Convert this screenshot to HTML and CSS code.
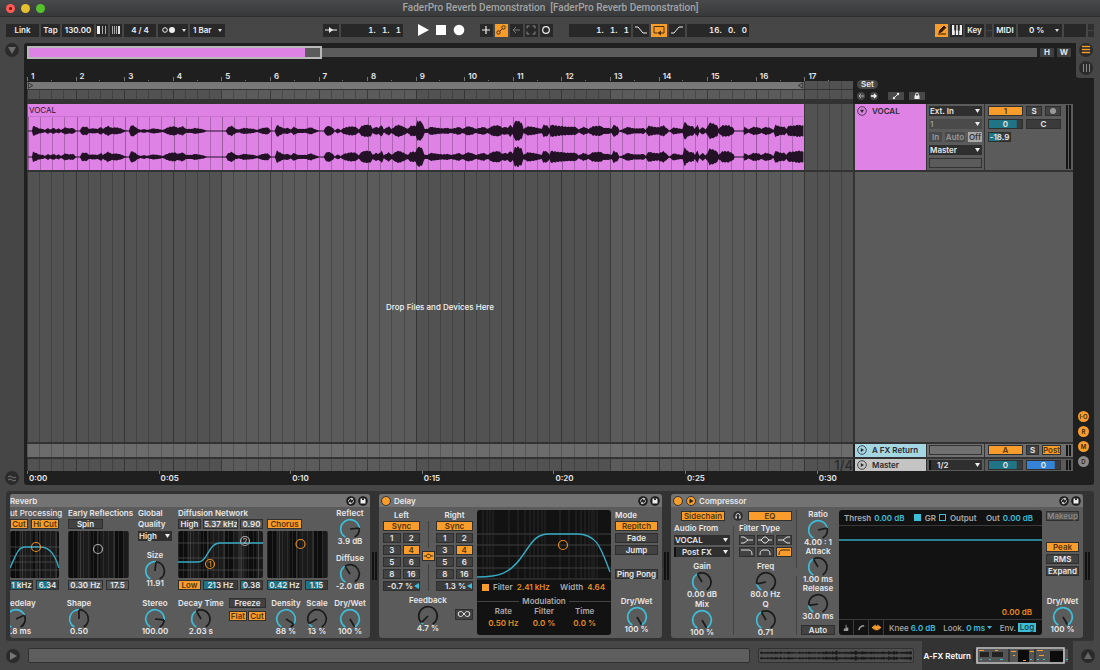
FILE: index.html
```html
<!DOCTYPE html>
<html lang="en">
<head>
    <meta charset="UTF-8">
    <meta name="viewport" content="width=device-width, initial-scale=1.0">
    <title>FaderPro Reverb Demonstration</title>
    <link rel="stylesheet" href="styles.css">
</head>
<body>

<!-- Shared icons -->
<svg class="hidden">
    <symbol id="i-swap" viewBox="0 0 10 10"><circle cx="5" cy="5" r="4.8" fill="#1c1c1c"/><path d="M2.6 5.6A2.5 2.5 0 0 1 6 2.8M7.4 4.4A2.5 2.5 0 0 1 4 7.2" fill="none" stroke="#ddd"/><path d="M5.4 1.4 7.6 3 5.4 4.4zM4.6 8.6 2.4 7l2.2-1.400z" fill="#ddd"/></symbol>
    <symbol id="i-save" viewBox="0 0 10 10"><circle cx="5" cy="5" r="4.8" fill="#1c1c1c"/><path d="M2.500 2.500h4.200l.8.8v4.200h-5z" fill="#eee"/><path d="M4 2.500h2v1.500H4z" fill="#1c1c1c"/></symbol>
    <symbol id="i-fold" viewBox="0 0 10 10"><circle cx="5" cy="5" r="4.300" fill="none" stroke="currentColor" stroke-width=".8"/><path d="M3.800 3v4L7 5z" fill="currentColor"/></symbol>
</svg>

<header class="titlebar">
    <button class="light red" aria-label="Close"></button>
    <button class="light yellow" aria-label="Minimize"></button>
    <button class="light green" aria-label="Zoom"></button>
    <h1>FaderPro Reverb Demonstration&nbsp; [FaderPro Reverb Demonstration]</h1>
</header>

<nav class="toolbar">
    <div class="tools">
        <button class="tool w33">Link</button>
        <button class="tool w19">Tap</button>
        <input class="tool w32" aria-label="Tempo" value="130.00">
        <button class="tool w12" aria-label="Nudge down"><svg viewBox="0 0 12 12"><path d="M1 2h3v8H1z" fill="#eee"/><path d="M6 2h1v8H6zM9 2h1v8H9z" fill="#aaa"/></svg></button>
        <button class="tool w12" aria-label="Nudge up"><svg viewBox="0 0 12 12"><path d="M2 2h1v8H2zM4 2h1v8H4zM6 2h1v8H6z" fill="#aaa"/><path d="M8 2h2v8H8z" fill="#ddd"/></svg></button>
        <input class="tool w32" aria-label="Time signature" value="4 / 4">
        <button class="tool w30" aria-label="Metronome"><svg class="wide" viewBox="0 0 28 12"><circle cx="6" cy="6" r="2.300" fill="none" stroke="#eee"/><circle cx="13" cy="6" r="3" fill="#eee"/><path d="M23 5h4l-2 3z" fill="#ddd"/></svg></button>
        <select class="tool w35" aria-label="Quantization"><option>1 Bar</option></select>
    </div>
    <div class="spacer"></div>
    <div class="tools">
        <button class="tool w16" aria-label="Follow"><svg viewBox="0 0 12 12"><path d="M0 6h12" stroke="#eee"/><path d="M4 3v6l4-3z" fill="#eee"/></svg></button>
        <input class="tool w62 count" aria-label="Position" value="1.   1.   1">
        <div class="transport">
            <button aria-label="Play"><svg viewBox="0 0 12 12"><path d="M1 0v12l11-6z" fill="#fff"/></svg></button>
            <button aria-label="Stop"><svg viewBox="0 0 12 12"><path d="M1 1h10v10H1z" fill="#fff"/></svg></button>
            <button aria-label="Record"><svg viewBox="0 0 12 12"><circle cx="6" cy="6" r="5.300" fill="#fff"/></svg></button>
        </div>
        <button class="tool w13" aria-label="Overdub"><svg viewBox="0 0 12 12"><path d="M6 2v8M2 6h8" stroke="#eee" stroke-width="1.200"/></svg></button>
        <button class="tool w13 on" aria-label="Automation arm"><svg viewBox="0 0 12 12"><g fill="none" stroke="#4a2f0c"><circle cx="3.500" cy="8.500" r="1.700"/><circle cx="8.500" cy="3.500" r="1.700"/><path d="m4.800 7.200 2.400-2.400"/></g></svg></button>
        <button class="tool w13" aria-label="Re-enable automation"><svg viewBox="0 0 12 12"><path d="M10 6H3M6 3 3 6l3 3" fill="none" stroke="#777"/></svg></button>
        <button class="tool w13" aria-label="Capture"><svg viewBox="0 0 12 12"><path d="M2 4.500V2h2.500M7.500 2H10v2.500M10 7.500V10H7.500M4.500 10H2V7.500" fill="none" stroke="#888"/></svg></button>
        <button class="tool w13" aria-label="Session record"><svg viewBox="0 0 12 12"><circle cx="6" cy="6" r="3.300" fill="none" stroke="#eee" stroke-width="1.200"/></svg></button>
        <div class="gap"></div>
        <input class="tool w62 count" aria-label="Loop start" value="1.   1.   1">
        <button class="tool w16" aria-label="Punch in"><svg viewBox="0 0 12 12"><path d="M0 3h3l5 6h4" fill="none" stroke="#eee"/></svg></button>
        <button class="tool w16 on" aria-label="Loop"><svg viewBox="0 0 12 12"><path d="M4.500 9H1V2.500h10V9H8" fill="none" stroke="#4a2f0c"/><path d="M4.500 9 8 6.500v5z" fill="#4a2f0c"/></svg></button>
        <button class="tool w16" aria-label="Punch out"><svg viewBox="0 0 12 12"><path d="M0 9h3l5-6h4" fill="none" stroke="#eee"/></svg></button>
        <input class="tool w62 count" aria-label="Loop length" value="16.   0.   0">
    </div>
    <div class="spacer wider"></div>
    <div class="tools">
        <button class="tool w13 on" aria-label="Draw mode"><svg viewBox="0 0 12 12"><path d="m3 8.500.8-2L8 2l1.700 1.700-4.300 4.300zM2 10h8" fill="#2a1a05" stroke="#2a1a05"/></svg></button>
        <button class="tool w13" aria-label="Computer keyboard"><svg viewBox="0 0 12 12"><path d="M1 1h10v10H1z" fill="#eee"/><path d="M4.300 1v10M7.700 1v10" stroke="#222"/><path d="M4.300 1v5.500M7.700 1v5.500" stroke="#222" stroke-width="2"/></svg></button>
        <button class="tool w19">Key</button>
        <span class="pair"><i></i><i></i></span>
        <button class="tool w21">MIDI</button>
        <select class="tool w44" aria-label="CPU load"><option>0 %</option></select>
        <span class="tool w21"></span>
        <span class="pair"><i></i><i></i></span>
    </div>
</nav>

<main class="workspace">
    <aside class="left-rail">
        <button class="round" aria-label="Show browser"><svg viewBox="0 0 14 14"><path d="M3 4h8l-4 7z" fill="#6c6c6c"/></svg></button>
        <button class="round" aria-label="Show groove pool"><svg viewBox="0 0 14 14"><path d="M3 6q2-2 4 0t4 0M3 9q2-2 4 0t4 0" fill="none" stroke="#777"/></svg></button>
    </aside>

    <section class="arranger">
        <div class="sheet">
            <div class="overview">
                <div class="overview-bar"><div class="overview-window"><div class="overview-clip"></div></div></div>
                <button class="hw">H</button>
                <button class="hw">W</button>
            </div>

            <div class="row ruler-row">
                <div class="lane">
                    <ol class="bars">
                        <li>1</li><li>2</li><li>3</li><li>4</li><li>5</li><li>6</li><li>7</li><li>8</li><li>9</li><li>10</li><li>11</li><li>12</li><li>13</li><li>14</li><li>15</li><li>16</li><li>17</li>
                    </ol>
                    <div class="loop grid"><div class="loop-bar">
                        <svg viewBox="0 0 7 8"><path d="M1 1l5 3-5 3z" fill="none" stroke="#2a2a2a"/></svg>
                        <svg viewBox="0 0 7 8"><path d="M6 1 1 4l5 3z" fill="none" stroke="#2a2a2a"/></svg>
                    </div></div>
                    <div class="scrub grid"></div>
                    <div class="locators"></div>
                </div>
                <div class="set-tools">
                    <button class="set">Set</button>
                    <div class="set-row">
                        <button class="dot" aria-label="Previous locator"><svg viewBox="0 0 8 8"><path d="M7 4H2M4 2 2 4l2 2" fill="none" stroke="#aaa"/></svg></button>
                        <button class="dot" aria-label="Next locator"><svg viewBox="0 0 8 8"><path d="M1 4h5M4 2l2 2-2 2" fill="none" stroke="#fff" stroke-width="1.300"/></svg></button>
                        <button class="tag" aria-label="Automation mode"><svg viewBox="0 0 10 8"><path d="m3 6 4-4" stroke="#eee"/><circle cx="3" cy="6" r="1.200" fill="#eee"/><circle cx="7" cy="2" r="1.200" fill="#eee"/></svg></button>
                        <button class="tag" aria-label="Lock envelopes"><svg viewBox="0 0 10 8"><path d="M2.500 3.500h5V7h-5z" fill="#eee"/><path d="M3.500 4V2.500a1.500 1.500 0 0 1 3 0V4" fill="none" stroke="#eee"/></svg></button>
                    </div>
                </div>
            </div>

            <div class="row track-row">
                <div class="lane grid">
                    <div class="clip">
                        <div class="clip-name">VOCAL</div>
                        <svg class="wave" viewBox="0 0 777 53" preserveAspectRatio="none"></svg>
                    </div>
                </div>
                <div class="head">
                    <div class="name pink"><svg class="rot"><use href="#i-fold"/></svg>VOCAL</div>
                    <div class="io">
                        <select class="pick" aria-label="Input type"><option>Ext. In</option></select>
                        <select class="pick dim" aria-label="Input channel"><option>1</option></select>
                        <div class="monitor"><button>In</button><button>Auto</button><button class="sel">Off</button></div>
                        <select class="pick" aria-label="Output type"><option>Master</option></select>
                        <div class="slot"></div>
                    </div>
                    <div class="mixer">
                        <div class="line"><button class="btn on w35">1</button><button class="btn w16">S</button><button class="btn w16" aria-label="Arm"><svg viewBox="0 0 8 8"><circle cx="4" cy="4" r="3" fill="#999"/></svg></button></div>
                        <div class="line"><input class="val w35" aria-label="Volume" value="0" style="--fill:84%"><input class="val w35" aria-label="Pan" value="C"></div>
                        <div class="line"><input class="val w23" aria-label="Send A" value="-18.9" style="--fill:50%"></div>
                        <div class="meter"></div>
                    </div>
                </div>
            </div>

            <div class="row drop-row">
                <div class="lane grid"><p>Drop Files and Devices Here</p></div>
                <div class="blank"></div>
            </div>

            <div class="row return-row">
                <div class="lane grid"></div>
                <div class="head">
                    <div class="name blue"><svg><use href="#i-fold"/></svg>A FX Return</div>
                    <div class="io"><div class="slot"></div></div>
                    <div class="mixer">
                        <div class="line"><button class="btn on w35">A</button><button class="btn w13">S</button><button class="btn on w19">Post</button></div>
                        <div class="meter"></div>
                    </div>
                </div>
            </div>

            <div class="row master-row">
                <div class="lane grid"><span class="zoom-level">1/4</span></div>
                <div class="head">
                    <div class="name grey"><svg><use href="#i-fold"/></svg>Master</div>
                    <div class="io"><select class="pick bars-in" aria-label="Master output"><option>1/2</option></select></div>
                    <div class="mixer">
                        <div class="line"><input class="val w35" aria-label="Master volume" value="0" style="--fill:84%"><input class="val w35 cue" aria-label="Cue volume" value="0" style="--fill:84%"></div>
                        <div class="meter"></div>
                    </div>
                </div>
            </div>

            <ol class="times">
                <li>0:00</li><li>0:05</li><li>0:10</li><li>0:15</li><li>0:20</li><li>0:25</li><li>0:30</li>
            </ol>
        </div>

        <aside class="right-rail">
            <div class="views">
                <button class="round" aria-label="Arrangement view"><svg viewBox="0 0 14 14"><path d="M3 3h8v1H3zM3 6h8v1H3zM3 9h8v1H3z" fill="#f89d2c" stroke="#f89d2c" stroke-width=".4"/></svg></button>
                <button class="round" aria-label="Session view"><svg viewBox="0 0 14 14"><path d="M4 3h1v8H4zM7 3h1v8H7zM10 3h1v8h-1z" fill="#888"/></svg></button>
            </div>
            <div class="shows">
                <button>I·O</button>
                <button>R</button>
                <button>M</button>
                <button class="off">D</button>
            </div>
        </aside>
    </section>
</main>

<section class="devices">
    <!-- The chain is scrolled, so the first column shows only its right part -->
    <article class="device reverb">
        <header><h2>Reverb</h2><svg><use href="#i-swap"/></svg><svg><use href="#i-save"/></svg></header>
        <div class="body">
            <div class="col c-input">
                <div class="upper">
                    <h3>ut Processing</h3>
                    <div class="line"><button class="btn on w17">Cut</button><button class="btn on w28">Hi Cut</button></div>
                    <svg class="plot" viewBox="0 0 49 47"><path class="rule" d="M0 16h49M0 25h49M0 31h49M0 39h49M27 0v47"/><path class="curve" d="M0 37C6 24 8 16 15 16H30C40 16 45 24 49 37"/><circle class="node" cx="26" cy="16" r="4.500"/></svg>
                    <div class="line"><input class="val w23" aria-label="Input filter frequency" value="1 kHz" style="--fill:48%"><input class="val w23" aria-label="Input filter width" value="6.34" style="--fill:60%"></div>
                </div>
                <label class="dial">edelay<input type="range" value="72"><output>.8 ms</output></label>
            </div>
            <div class="col c-early">
                <div class="upper">
                    <h3>Early Reflections</h3>
                    <button class="btn w35">Spin</button>
                    <svg class="plot" viewBox="0 0 61 47"><circle class="node pale" cx="30" cy="18" r="4.500"/></svg>
                    <div class="line"><input class="val w35 flat" aria-label="Spin rate" value="0.30 Hz"><input class="val w23 flat" aria-label="Spin amount" value="17.5"></div>
                </div>
                <label class="dial left">Shape<input type="range" value="50"><output>0.50</output></label>
            </div>
            <div class="col c-global">
                <div class="upper">
                    <h3>Global</h3>
                    <label for="quality">Quality</label>
                    <select class="pick" id="quality"><option>High</option></select>
                    <label class="dial">Size<input type="range" value="52"><output>11.91</output></label>
                </div>
                <label class="dial">Stereo<input type="range" value="82"><output>100.00</output></label>
            </div>
            <div class="col c-diff">
                <div class="upper pair-cols">
                    <div class="upper">
                        <h3>Diffusion Network</h3>
                        <div class="line"><button class="btn w23">High</button><input class="val w35 flat" aria-label="High frequency" value="5.37 kHz"><input class="val w23 flat" aria-label="High shelf" value="0.90"></div>
                        <svg class="plot" viewBox="0 0 85 47"><path class="rule" d="M0 12h85M0 27h85M0 39h85M62 0v47"/><path class="curve" d="M0 31H20C30 31 30 12 42 12H85"/><circle class="node" cx="32" cy="33" r="4.500"/><text x="32" y="36" class="num">1</text><circle class="node pale" cx="67" cy="10" r="4.500"/><text x="67" y="13" class="num pale">2</text></svg>
                        <div class="line"><button class="btn on w23">Low</button><input class="val w35" aria-label="Low frequency" value="213 Hz" style="--fill:33%"><input class="val w23" aria-label="Low shelf" value="0.38" style="--fill:26%"></div>
                    </div>
                    <div class="upper chorus">
                        <button class="btn on w35">Chorus</button>
                        <svg class="plot" viewBox="0 0 60 47"><circle class="node" cx="33" cy="13" r="4.500"/></svg>
                        <div class="line"><input class="val w35" aria-label="Chorus rate" value="0.42 Hz" style="--fill:60%"><input class="val w23" aria-label="Chorus amount" value="1.15" style="--fill:78%"></div>
                    </div>
                </div>
                <div class="lower">
                    <label class="dial">Decay Time<input type="range" value="40"><output>2.03 s</output></label>
                    <div class="freeze"><button class="btn">Freeze</button><div class="line"><button class="btn on w17">Flat</button><button class="btn on w17">Cut</button></div></div>
                    <label class="dial">Density<input type="range" value="91"><output>88 %</output></label>
                    <label class="dial">Scale<input type="range" value="10"><output>13 %</output></label>
                </div>
            </div>
            <div class="col dials">
                <label class="dial">Reflect<input type="range" value="78"><output>3.9 dB</output></label>
                <label class="dial">Diffuse<input type="range" value="39"><output>-2.0 dB</output></label>
                <label class="dial">Dry/Wet<input type="range" value="100"><output>100 %</output></label>
            </div>
        </div>
    </article>

    <div class="level"></div>

    <article class="device delay">
        <header><button class="power" aria-label="Delay on"></button><h2>Delay</h2><svg><use href="#i-swap"/></svg><svg><use href="#i-save"/></svg></header>
        <div class="body">
            <div class="times-block">
                <div class="sides">
                    <div class="side">
                        <h3>Left</h3>
                        <button class="btn on sync">Sync</button>
                        <button class="btn">1</button><button class="btn">2</button>
                        <button class="btn">3</button><button class="btn on">4</button>
                        <button class="btn">5</button><button class="btn">6</button>
                        <button class="btn">8</button><button class="btn">16</button>
                        <input class="val offset" aria-label="Left offset" value="-0.7 %">
                    </div>
                    <div class="link"><i></i><button class="btn on" aria-label="Link channels"><svg viewBox="0 0 12 8"><path d="M1 4h2M9 4h2M5 2 3 4l2 2M7 2l2 2-2 2M5 2h2M5 6h2" fill="none" stroke="#3a2508"/></svg></button><i></i></div>
                    <div class="side">
                        <h3>Right</h3>
                        <button class="btn on sync">Sync</button>
                        <button class="btn">1</button><button class="btn">2</button>
                        <button class="btn">3</button><button class="btn on">4</button>
                        <button class="btn">5</button><button class="btn">6</button>
                        <button class="btn">8</button><button class="btn">16</button>
                        <input class="val offset" aria-label="Right offset" value="1.3 %">
                    </div>
                </div>
                <div class="feedback">
                    <label class="dial">Feedback<input type="range" value="5"><output>4.7 %</output></label>
                    <i></i>
                    <button class="btn" aria-label="Freeze"><svg viewBox="0 0 14 8"><path d="M7 4C5.500 2 4.700 1.500 3.700 1.500a2.500 2.500 0 0 0 0 5C4.700 6.500 5.500 6 7 4s2.300-2.500 3.300-2.500a2.500 2.500 0 0 1 0 5C9.300 6.500 8.500 6 7 4z" fill="none" stroke="#eee"/></svg></button>
                </div>
            </div>
            <div class="screen filter">
                <svg viewBox="0 0 134 70"><path class="rule" d="M0 24h134M0 35h134M0 46h134M0 58h134M0 69h134"/><path class="rule faint" d="M6 0v69M10 0v69M13 0v69M16 0v69M32 0v69M41 0v69M48 0v69M53 0v69M57 0v69M61 0v69M65 0v69M68 0v69M83 0v69M92 0v69M99 0v69M104 0v69M108 0v69M112 0v69M115 0v69M117 0v69M120 0v69"/><path class="curve" d="M0 67C22 67 33 64 46 45 56 30 60 24 72 24H100C120 24 124 38 133 62"/><circle class="node" cx="86" cy="35" r="4.500"/></svg>
                <div class="readout"><label><input type="checkbox" checked>Filter</label><b>2.41 kHz</b><span class="push">Width</span><b>4.64</b></div>
                <div class="divide">Modulation</div>
                <div class="mods">
                    <div>Rate<b>0.50 Hz</b></div>
                    <div>Filter<b>0.0 %</b></div>
                    <div>Time<b>0.0 %</b></div>
                </div>
            </div>
            <div class="modes">
                <h3>Mode</h3>
                <button class="btn on">Repitch</button>
                <button class="btn">Fade</button>
                <button class="btn">Jump</button>
                <button class="btn ping">Ping Pong</button>
                <label class="dial end">Dry/Wet<input type="range" value="100"><output>100 %</output></label>
            </div>
        </div>
    </article>

    <div class="level"></div>

    <article class="device compressor">
        <header><button class="power" aria-label="Compressor on"></button><button class="power play" aria-label="Hide sidechain"><svg viewBox="0 0 8 8"><path d="M2.500 1.500v5L6.500 4z" fill="#222"/></svg></button><h2>Compressor</h2><svg><use href="#i-swap"/></svg><svg><use href="#i-save"/></svg></header>
        <div class="body">
            <div class="sidechain">
                <div class="line tops">
                    <button class="btn on w44">Sidechain</button>
                    <button class="listen" aria-label="Listen"><svg viewBox="0 0 10 10"><circle cx="5" cy="5" r="4.800" fill="#2c2c2c"/><path d="M3 7V4.500a2 2 0 0 1 4 0V7" fill="none" stroke="#ccc"/><path d="M2.500 5.500H4v2H2.500zM6 5.500h1.500v2H6z" fill="#ccc"/></svg></button>
                    <button class="btn on w44">EQ</button>
                </div>
                <div class="halves">
                    <div class="half">
                        <h3>Audio From</h3>
                        <select class="pick" aria-label="Audio from"><option>VOCAL</option></select>
                        <select class="pick bars-in" aria-label="Tap point"><option>Post FX</option></select>
                        <label class="dial">Gain<input type="range" value="40"><output>0.00 dB</output></label>
                        <label class="dial">Mix<input type="range" value="100"><output>100 %</output></label>
                    </div>
                    <div class="half">
                        <h3>Filter Type</h3>
                        <div class="types">
                            <button class="btn" aria-label="Low shelf"><svg viewBox="0 0 14 8"><path d="M1 1h3l4 3-4 3H1M8 4h5"/></svg></button>
                            <button class="btn" aria-label="Bell"><svg viewBox="0 0 14 8"><path d="M0 4h3l3-3h2l3 3h3M3 4l3 3h2l3-3"/></svg></button>
                            <button class="btn" aria-label="High shelf"><svg viewBox="0 0 14 8"><path d="M13 1h-3L6 4l4 3h3M6 4H1"/></svg></button>
                            <button class="btn" aria-label="Low pass"><svg viewBox="0 0 14 8"><path d="M1 2h8q3 0 3 5"/></svg></button>
                            <button class="btn" aria-label="Band pass"><svg viewBox="0 0 14 8"><path d="M2 7q0-5 3-5h4q3 0 3 5"/></svg></button>
                            <button class="btn on" aria-label="High pass"><svg viewBox="0 0 14 8"><path d="M2 7q0-5 3-5h8"/></svg></button>
                        </div>
                        <label class="dial">Freq<input type="range" value="16"><output>80.0 Hz</output></label>
                        <label class="dial">Q<input type="range" value="40"><output>0.71</output></label>
                    </div>
                </div>
            </div>
            <div class="rail-line"></div>
            <div class="ratios">
                <label class="dial">Ratio<input type="range" value="76"><output>4.00 : 1</output></label>
                <label class="dial">Attack<input type="range" value="40"><output>1.00 ms</output></label>
                <label class="dial">Release<input type="range" value="17"><output>30.0 ms</output></label>
                <button class="btn">Auto</button>
            </div>
            <div class="screen dynamics">
                <div class="readout top"><span>Thresh</span><b>0.00 dB</b><label class="push"><input type="checkbox" checked>GR</label><label><input type="checkbox">Output</label><span class="push">Out</span><b>0.00 dB</b></div>
                <div class="history"><b>0.00 dB</b></div>
                <div class="readout foot">
                    <button aria-label="Transfer curve"><svg viewBox="0 0 10 10"><path d="M2 9V6h2V2h1v3h2v4z" fill="#999"/></svg></button>
                    <button aria-label="Knee view"><svg viewBox="0 0 10 10"><path d="M2 8q1-5 6-5" fill="none" stroke="#999" stroke-width="1.500"/></svg></button>
                    <button aria-label="Activity view"><svg viewBox="0 0 10 10"><path d="M0 5h10M2 3v4M3.500 2v6M5 3v5M6.500 2v6M8 3v4" stroke="#f89d2c" stroke-width="1.400"/></svg></button>
                    <span>Knee</span><b>6.0 dB</b><span class="push">Look.</span><b>0 ms</b><svg class="mini" viewBox="0 0 5 4"><path d="M0 0h5L2.500 3z" fill="#3ebdd8"/></svg><span class="push">Env.</span><button class="log">Log</button>
                </div>
            </div>
            <div class="modes">
                <button class="btn ghost">Makeup</button>
                <button class="btn on peak">Peak</button>
                <button class="btn">RMS</button>
                <button class="btn">Expand</button>
                <label class="dial end">Dry/Wet<input type="range" value="100"><output>100 %</output></label>
            </div>
        </div>
    </article>

    <div class="level"></div>
</section>

<footer class="status">
    <button class="round" aria-label="Show info"><svg viewBox="0 0 14 14"><path d="M4 3v8l7-4z" fill="#777"/></svg></button>
    <div class="info"></div>
    <div class="clip-view"><svg class="wave" viewBox="0 0 777 53" preserveAspectRatio="none"></svg></div>
    <div class="chain">
        <span>A-FX Return</span>
        <svg class="minimap" viewBox="0 0 98 17">
            <path d="M3 2h92v13H3z" fill="#555"/>
            <path d="M7 5h9v5H7zM19 5h11v5H19z" fill="#222"/>
            <path d="M45 3h11v12H45zM77 4h13v11H77z" fill="#0c0c0c"/>
            <path d="M6 3h5v1H6zM22 3h3v1h-3zM38 4h5v1h-5zM57 4h4v1h-4zM64 3h6v1h-6zM66 8h5v1h-5zM40 8h2v1h-2zM50 13h3v1h-3z" fill="#f89d2c"/>
            <path d="M7 12h2v1H7zM16 12h2v1h-2zM27 12h3v1h-3zM57 12h2v1h-2zM64 12h2v1h-2zM70 12h2v1h-2zM93 12h2v1h-2z" fill="#3ebdd8"/>
            <path d="M1 2v13M36 2v13M62 2v13" stroke="#1a1a1a"/>
            <path d="M4 1h87v15H4z" fill="none" stroke="#c8c8c8" stroke-width="1.500"/>
        </svg>
    </div>
    <button class="round" aria-label="Hide devices"><svg viewBox="0 0 14 14"><path d="M3 10h8L7 3z" fill="#666"/></svg></button>
</footer>

<script src="script.js"></script>
</body>
</html>
```
FILE: styles.css
```css
/* Basic Reset */
* {
    margin: 0;
    padding: 0;
    box-sizing: border-box;
}

:root {
    --frame: #464646;
    --dark: #1f1f1f;
    --well: #333;
    --face: #5b5b5b;
    --orange: #f89d2c;
    --cyan: #3ebdd8;
    --teal: #1f7486;
    --pink: #de82e6;
}

body {
    display: flex;
    flex-direction: column;
    height: 100vh;
    overflow: hidden;
    background: var(--frame);
    color: #e8e8e8;
    font: 600 8px/10px Inter, "Liberation Sans", sans-serif;
}

button, input, select {
    font: inherit;
    color: inherit;
    border: 0;
    border-radius: 0;
    background: none;
    appearance: none;
    min-width: 0;
}

button {
    cursor: pointer;
    white-space: nowrap;
}

input {
    text-align: center;
    outline: none;
}

svg {
    display: block;
}

ol {
    list-style: none;
}

h2, h3 {
    font: inherit;
    white-space: nowrap;
}

.hidden {
    position: absolute;
    width: 0;
    height: 0;
}

/* Shared widths */
.w12 { width: 12px; }
.w13 { width: 13px; }
.w16 { width: 16px; }
.w17 { width: 18px; }
.w19 { width: 19px; }
.w21 { width: 22px; }
.w23 { width: 23px; }
.w28 { width: 28px; }
.w30 { width: 30px; }
.w32 { width: 32px; }
.w33 { width: 33px; }
.w35 { width: 35px; }
.w44 { width: 44px; }
.w62 { width: 62px; }

/* Title bar */
.titlebar {
    display: flex;
    align-items: center;
    gap: 6px;
    height: 17px;
    padding: 0 6px;
    background: linear-gradient(#47494b, #37393b);
    border-bottom: 1px solid #2e2f30;
}

.titlebar h1 {
    flex: 1;
    margin-right: 44px;
    text-align: center;
    font: 500 10px/14px Roboto, sans-serif;
    color: #a4a4a4;
}

.light {
    width: 9px;
    height: 9px;
    border-radius: 50%;
}

.red { background: radial-gradient(#7d1210 0 1px, #fc5b55 2px); }
.yellow { background: #e6bf2d; }
.green { background: #55c22c; }

/* Toolbar */
.toolbar {
    display: flex;
    align-items: center;
    height: 26px;
    padding: 0 6px;
}

.tools {
    display: flex;
    align-items: center;
    gap: 2px;
}

.spacer { flex: 20; }
.spacer.wider { flex: 38; }
.gap { width: 12px; }

.tool {
    height: 13px;
    background: #282828;
    color: #eee;
}

.tool svg {
    width: 12px;
    height: 12px;
    margin: 0 auto;
}

.tool svg.wide {
    width: 28px;
}

.tool.on {
    background: var(--orange);
}

.tool.w35, .tool.w44 {
    padding-left: 3px;
    background: #282828 url("data:image/svg+xml,%3Csvg xmlns='http://www.w3.org/2000/svg' width='4' height='3'%3E%3Cpath d='M0 0h4L2 3z' fill='%23ddd'/%3E%3C/svg%3E") no-repeat right 3px center;
}

.tool.w44 {
    padding-left: 11px;
}

.count {
    padding-right: 2px;
    text-align: right;
    font-variant-numeric: tabular-nums;
}

.transport {
    display: flex;
    gap: 6px;
    padding: 0 13px 0 12px;
}

.transport svg {
    width: 12px;
    height: 12px;
}

.pair {
    display: grid;
    gap: 1px;
}

.pair i {
    width: 6px;
    height: 6px;
    background: #2f2f2f;
}

/* Arrangement */
.workspace {
    flex: 1;
    display: flex;
    min-height: 0;
    padding-right: 6px;
}

.left-rail {
    width: 24px;
    display: flex;
    flex-direction: column;
    justify-content: space-between;
    align-items: center;
}

.round {
    width: 14px;
    height: 14px;
    border-radius: 50%;
    background: #2b2b2b;
}

.round svg {
    width: 14px;
    height: 14px;
}

.arranger {
    flex: 1;
    display: flex;
    gap: 3px;
    padding-left: 3px;
    background: var(--dark);
    border-radius: 3px;
    min-width: 0;
}

.sheet {
    flex: 1;
    display: flex;
    flex-direction: column;
    min-width: 0;
}

.overview {
    display: flex;
    align-items: center;
    gap: 3px;
    height: 16px;
    padding: 2px 2px 0 0;
}

.overview-bar {
    flex: 1;
    display: flex;
    align-items: center;
    height: 9px;
    background: var(--face);
}

.overview-window {
    width: 29.2%;
    height: 13px;
    border: 2px solid #b8b8b8;
    background: var(--face);
    z-index: 1;
}

.overview-clip {
    width: 95%;
    height: 9px;
    background: var(--pink);
}

.hw {
    width: 14px;
    height: 9px;
    line-height: 9px;
    font-weight: 700;
    background: #3f3f3f;
}

.row {
    display: grid;
    grid-template-columns: 1fr 218px;
    gap: 2px;
}

.lane {
    min-width: 0;
    display: flex;
    flex-direction: column;
}

/* 17 bars of four beats, shaded in blocks of four bars */
.grid {
    background:
        repeating-linear-gradient(90deg, rgba(0, 0, 0, .2) 0 1px, transparent 1px calc(100% / 17)),
        repeating-linear-gradient(90deg, rgba(0, 0, 0, .2) 0 1px, transparent 1px calc(100% / 68)),
        linear-gradient(90deg, #525252 23.53%, #5b5b5b 23.53% 47.06%, #525252 47.06% 70.59%, #5b5b5b 70.59% 94.12%, #525252 94.12%);
}

.ruler-row {
    height: 45px;
}

.bars {
    display: grid;
    grid-template-columns: repeat(17, 1fr);
    padding-top: 12px;
}

.bars li {
    height: 10px;
    padding-left: 4px;
    background:
        linear-gradient(#777, #777) 0 100% / 1px 4px no-repeat,
        linear-gradient(#777, #777) 50% 100% / 1px 1px no-repeat;
}

.loop-bar {
    display: flex;
    justify-content: space-between;
    width: 94.12%;
    height: 8px;
    background: #787878;
    border-top: 1px solid var(--dark);
}

.loop-bar svg {
    width: 7px;
    height: 7px;
}

.scrub {
    flex: 1;
    border-top: 1px solid var(--well);
}

.locators {
    height: 5px;
    background: var(--well);
}

.set-tools {
    padding: 21px 0 0 2px;
}

.set {
    display: block;
    width: 21px;
    height: 9px;
    line-height: 9px;
    border-radius: 5px;
    background: #484848;
}

.set-row {
    display: flex;
    gap: 5px;
    padding-top: 3px;
}

.dot {
    width: 8px;
    height: 8px;
    border-radius: 50%;
    background: #484848;
}

.dot svg {
    width: 8px;
    height: 8px;
}

.tag {
    width: 16px;
    height: 8px;
    margin-left: 5px;
    background: #484848;
}

.tag + .tag {
    margin-left: 0;
}

.tag svg {
    width: 10px;
    height: 8px;
    margin: 0 auto;
}

.track-row {
    height: 68px;
    border-bottom: 2px solid var(--well);
    background: var(--well);
}

.clip {
    width: 94.12%;
    height: 66px;
    display: flex;
    flex-direction: column;
    border-left: 1px solid var(--teal);
    background: var(--pink);
    color: #2b152e;
}

.clip-name {
    height: 13px;
    padding-left: 1px;
    font-weight: 400;
    line-height: 13px;
    border-bottom: 1px solid #c873cf;
}

.clip .wave {
    flex: 1;
    width: 100%;
    min-height: 0;
    background:
        repeating-linear-gradient(90deg, rgba(0, 0, 0, .12) 0 1px, transparent 1px calc(100% / 16)),
        repeating-linear-gradient(90deg, rgba(0, 0, 0, .22) 0 1px, transparent 1px calc(100% / 64));
}

.wave path {
    fill: #231226;
}

.head {
    display: grid;
    grid-template-columns: 71px 57px 1fr;
    gap: 1px;
    background: var(--well);
}

.name {
    display: flex;
    align-items: flex-start;
    gap: 5px;
    padding: 2px;
    color: #2b2b2b;
}

.name svg {
    width: 10px;
    height: 10px;
}

.name .rot {
    transform: rotate(90deg);
}

.pink { background: var(--pink); }
.blue { background: #a4d6e4; }
.grey { background: #c4c4c4; }

.io, .mixer {
    display: flex;
    flex-direction: column;
    gap: 3px;
    padding: 2px;
    background: var(--face);
}

.mixer {
    position: relative;
    padding-left: 3px;
}

.line {
    display: flex;
    gap: 3px;
}

.pick {
    width: 100%;
    height: 10px;
    padding: 0 0 0 1px;
    line-height: 10px;
    background: #2f2f2f url("data:image/svg+xml,%3Csvg xmlns='http://www.w3.org/2000/svg' width='5' height='4'%3E%3Cpath d='M0 0h5L2.500 4z' fill='%23eee'/%3E%3C/svg%3E") no-repeat right 2px center;
}

.pick.dim {
    color: #999;
    background-color: #4a4a4a;
}

.pick.bars-in {
    padding-left: 6px;
    border-left: 2px solid #111;
}

.monitor {
    display: flex;
    justify-content: space-between;
}

.monitor button {
    height: 10px;
    padding: 0 1px;
    background: #4a4a4a;
    color: #999;
}

.monitor button:first-child {
    padding: 0 3px;
}

.monitor .sel {
    background: #aaa;
    color: #333;
}

.slot {
    height: 10px;
    border: 1px solid #333;
}

.btn {
    height: 10px;
    line-height: 8px;
    flex-shrink: 0;
    background: #424242;
    border: 1px solid #2f2f2f;
}

.btn.on {
    background: var(--orange);
    color: #553408;
}

.btn svg {
    height: 8px;
    margin: 0 auto;
}

.btn.ghost {
    color: #8a8a8a;
    background: #4c4c4c;
}

.val {
    height: 10px;
    line-height: 8px;
    flex-shrink: 0;
    border: 1px solid #2f2f2f;
    background: linear-gradient(var(--teal), var(--teal)) 0 0 / var(--fill, 0%) 100% no-repeat #3b3b3b;
}

.val.flat {
    background: #555;
}

.val.cue {
    background-image: linear-gradient(#3583d6, #3583d6);
}

.meter {
    position: absolute;
    top: 1px;
    bottom: 1px;
    right: 2px;
    width: 5px;
    background: linear-gradient(90deg, #151515 2px, transparent 2px 3px, #151515 3px);
}

.drop-row {
    flex: 1;
    background: var(--well);
}

.drop-row .lane {
    justify-content: center;
    text-align: center;
    font-weight: 500;
    color: #f4f4f4;
}

.blank {
    background: var(--face);
}

.return-row, .master-row {
    height: 15px;
    border-top: 2px solid var(--well);
}

.master-row {
    height: 14px;
}

.return-row .io, .return-row .mixer {
    background: #707070;
}

.return-row .lane {
    background:
        repeating-linear-gradient(90deg, rgba(0, 0, 0, .2) 0 1px, transparent 1px calc(100% / 68)),
        #6c6c6c;
}

.return-row .name, .master-row .name,
.return-row .io, .master-row .io,
.return-row .mixer, .master-row .mixer {
    padding-top: 1px;
    padding-bottom: 1px;
}

.zoom-level {
    align-self: flex-end;
    font: 500 13px/12px Inter, sans-serif;
    color: #2a2a2a;
}

.times {
    display: grid;
    grid-template-columns: repeat(6, 500fr) 138fr;
    height: 14px;
    margin-right: 220px;
}

.times li {
    min-width: 0;
    padding: 1px 0 0 2px;
    background: linear-gradient(#777, #777) 0 0 / 1px 3px no-repeat;
    line-height: 12px;
}

.right-rail {
    width: 18px;
    display: flex;
    flex-direction: column;
    justify-content: space-between;
}

.views {
    display: grid;
    gap: 4px;
    padding: 0 0 3px 3px;
    background: var(--frame);
    border-bottom-left-radius: 3px;
}

.shows {
    display: grid;
    gap: 4px;
    padding: 0 0 18px 2px;
}

.shows button {
    width: 11px;
    height: 11px;
    border-radius: 50%;
    background: var(--orange);
    color: #3a2508;
    font-size: 6px;
    line-height: 11px;
}

.shows .off {
    background: #8a8a8a;
}

/* Device chain */
.devices {
    display: flex;
    margin: 6px 6px 0;
    padding: 3px 2px 3px 4px;
    background: var(--well);
    border-radius: 3px;
}

.device {
    height: 144px;
    background: var(--face);
    border-radius: 3px;
    overflow: hidden;
}

.device header {
    display: flex;
    align-items: center;
    gap: 2px;
    height: 13px;
    padding: 0 2px;
    background: #737373;
}

.device header h2 {
    flex: 1;
}

.device header > svg {
    width: 10px;
    height: 10px;
}

.power {
    width: 10px;
    height: 10px;
    margin-right: 1px;
    border-radius: 50%;
    border: 1px solid #333;
    background: var(--orange);
}

.power svg {
    width: 8px;
    height: 8px;
}

.body {
    display: flex;
    height: 131px;
}

.level {
    width: 9px;
    background:
        linear-gradient(#111, #111) 2px 58px / 2px 28px no-repeat,
        linear-gradient(#111, #111) 5px 58px / 2px 28px no-repeat;
}

/* Rotary controls */
.dial {
    display: flex;
    flex-direction: column;
    align-items: center;
    white-space: nowrap;
}

.dial output {
    margin-top: -2px;
}

.knob {
    position: relative;
    width: 22px;
    height: 20px;
}

.knob svg {
    width: 22px;
    height: 22px;
}

.knob input {
    position: absolute;
    inset: 0;
    width: 100%;
    height: 100%;
    opacity: 0;
}

.knob path {
    fill: none;
    stroke: #1b1b1b;
    stroke-width: 1.700;
}

.knob .arc {
    stroke: var(--cyan);
}

.plot {
    height: 47px;
    border-radius: 2px;
    background:
        repeating-linear-gradient(90deg, transparent 0 12px, rgba(90, 90, 90, .5) 12px 13px, transparent 13px 17px),
        repeating-linear-gradient(90deg, rgba(70, 70, 70, .4) 0 1px, transparent 1px 5px),
        repeating-linear-gradient(90deg, #0d0d0d 0 9px, #1b1b1b 9px 23px);
}

.rule {
    fill: none;
    stroke: #555;
    stroke-width: .7;
}

.rule.faint {
    stroke: #333;
}

.curve {
    fill: none;
    stroke: #37a9c2;
    stroke-width: 1.400;
}

.node {
    fill: none;
    stroke: #e58c22;
    stroke-width: 1.200;
}

.node.pale {
    stroke: #aaa;
}

.num {
    fill: #e58c22;
    text-anchor: middle;
    font-weight: 500;
}

.num.pale {
    fill: #aaa;
}

/* Reverb */
.reverb {
    width: 360px;
}

.reverb header {
    padding-left: 0;
}

.col {
    flex-shrink: 0;
    padding-top: 1px;
}

.upper {
    display: flex;
    flex-direction: column;
    gap: 2px;
    height: 90px;
}

.reverb .upper h3 {
    height: 9px;
}

.c-input {
    width: 49px;
}

.c-input h3 {
    font-weight: 500;
}

.c-input .dial {
    align-items: flex-start;
}

.c-input .knob {
    margin-left: -5px;
}

.dial.left {
    width: 22px;
}

.c-early {
    width: 61px;
    margin-left: 9px;
}

.c-global {
    width: 34px;
    margin-left: 9px;
}

.c-global .dial {
    width: 34px;
}

.c-global .upper .dial {
    margin-top: 7px;
}

.c-diff {
    width: 150px;
    margin-left: 6px;
}

.pair-cols {
    flex-direction: row;
    gap: 4px;
}

.c-diff .upper .upper:first-child {
    width: 85px;
}

.c-diff .upper .upper:first-child .line {
    gap: 2px;
}

.chorus {
    width: 61px;
    padding-top: 11px;
}

.c-input .line {
    justify-content: space-between;
}

.lower {
    display: flex;
    justify-content: space-between;
}

.freeze {
    display: grid;
    align-content: start;
    gap: 3px;
    width: 37px;
}

.freeze .line {
    gap: 1px;
}

.dials {
    width: 34px;
    margin-left: 5px;
}

.dials .dial {
    height: 45px;
}

/* Delay */
.delay {
    width: 283px;
}

.delay .body {
    gap: 4px;
    padding: 3px 4px;
}

.times-block {
    width: 90px;
}

.sides {
    display: flex;
}

.side {
    display: grid;
    grid-template-columns: 1fr 1fr;
    gap: 2px;
    width: 37px;
    text-align: center;
}

.side h3, .sync, .offset {
    grid-column: span 2;
}

.side h3 {
    height: 9px;
}

.offset {
    width: 100%;
    padding-right: 6px;
    text-align: right;
    background: #3b3b3b url("data:image/svg+xml,%3Csvg xmlns='http://www.w3.org/2000/svg' width='5' height='6'%3E%3Cpath d='M5 0v6L0 3z' fill='%233ebdd8'/%3E%3C/svg%3E") no-repeat right center;
}

.link {
    flex: 1;
    display: flex;
    flex-direction: column;
    align-items: center;
    gap: 3px;
    padding-top: 11px;
}

.link i {
    width: 1px;
    flex: 1;
    background: #3f3f3f;
}

.link .btn {
    width: 13px;
}

.link .btn svg {
    width: 11px;
}

.feedback {
    display: flex;
    align-items: center;
    gap: 4px;
    padding: 4px 0 0 26px;
}

.feedback i {
    width: 9px;
    height: 1px;
    background: #444;
}

.feedback .btn {
    width: 18px;
    height: 11px;
}

.feedback .dial {
    width: 38px;
}

.screen {
    display: flex;
    flex-direction: column;
    height: 125px;
    background: #121212;
    border-radius: 3px;
    color: #aaa;
    overflow: hidden;
}

.screen b {
    font-weight: 600;
}

.filter {
    width: 134px;
}

.filter b {
    color: #e58c22;
}

.readout {
    display: flex;
    align-items: center;
    gap: 4px;
    padding: 2px 6px 0 5px;
    white-space: nowrap;
}

.readout label {
    display: flex;
    align-items: center;
    gap: 4px;
}

.readout input {
    width: 7px;
    height: 7px;
    border: 1px solid var(--cyan);
}

.readout input:checked {
    background: var(--cyan);
}

.filter .readout input {
    border: 0;
    background: var(--orange);
}

.push {
    margin-left: auto;
}

.divide {
    display: flex;
    align-items: center;
    gap: 3px;
    padding-top: 4px;
}

.divide::before, .divide::after {
    content: "";
    flex: 1;
    height: 1px;
    background: #444;
}

.mods {
    display: grid;
    grid-template-columns: repeat(3, 1fr);
    padding: 0 6px;
    text-align: center;
}

.mods b {
    display: block;
    padding-top: 2px;
}

.modes {
    display: flex;
    flex-direction: column;
    gap: 2px;
    flex: 1;
}

.modes h3 {
    height: 9px;
}

.modes .ping {
    margin-top: 12px;
}

.modes .end {
    margin-top: auto;
    padding-bottom: 1px;
}

/* Compressor */
.compressor {
    flex: 1;
    min-width: 0;
}

.compressor .body {
    gap: 4px;
    padding: 3px 4px 3px 3px;
}

.sidechain {
    width: 118px;
}

.tops {
    gap: 8px;
    padding: 1px 0 0 7px;
}

.listen svg {
    width: 10px;
    height: 10px;
}

.halves {
    display: flex;
    gap: 9px;
    padding-top: 2px;
}

.half {
    display: flex;
    flex-direction: column;
    gap: 2px;
    width: 56px;
}

.half + .half {
    width: 53px;
    position: relative;
}

.half + .half::before {
    content: "";
    position: absolute;
    inset: 3px auto 0 -6px;
    width: 1px;
    background: #444;
}

.half .dial {
    height: 36px;
}

.half .dial:first-of-type {
    margin-top: 2px;
}

.types {
    display: grid;
    grid-template-columns: repeat(3, 1fr);
    gap: 2px;
}

.types svg {
    width: 14px;
    fill: none;
    stroke: #ddd;
}

.types .on svg {
    stroke: #402808;
}

.rail-line {
    width: 1px;
    background: linear-gradient(#444 58px, transparent 58px 66px, #444 66px);
}

.ratios {
    display: flex;
    flex-direction: column;
    width: 34px;
}

.ratios .dial {
    height: 38px;
    margin-top: -1px;
}

.ratios .btn {
    margin-top: auto;
}

.dynamics {
    flex: 1;
    min-width: 0;
}

.dynamics .readout {
    height: 15px;
    padding: 0 9px 0 5px;
}

.dynamics .top {
    gap: 3px;
}

.dynamics .readout b {
    color: var(--cyan);
}

.history {
    flex: 1;
    display: flex;
    justify-content: flex-end;
    align-items: flex-end;
    padding: 0 10px 2px;
    border-top: 1px solid #3a3a3a;
    border-bottom: 1px solid #3a3a3a;
    background: linear-gradient(#2a7f91, #2a7f91) 0 13px / 100% 2px no-repeat;
}

.history b {
    color: #e58c22;
}

.dynamics .foot {
    gap: 2px;
    padding: 0 6px 0 0;
    font-weight: 500;
}

.foot button {
    flex: none;
    width: 15px;
    height: 15px;
    margin-right: -2px;
    border-right: 1px solid #3a3a3a;
}

.foot button svg {
    width: 9px;
    height: 9px;
    margin: 0 auto;
}

.foot button + span {
    margin-left: 5px;
}

.foot .log {
    width: 18px;
    height: 9px;
    margin: 0;
    border: 0;
    line-height: 9px;
    background: var(--cyan);
    color: #143840;
}

.mini {
    width: 5px;
    height: 4px;
}

.compressor .modes {
    flex: none;
    width: 33px;
    padding-top: 1px;
}

.modes .peak {
    margin-top: 19px;
}

/* Status bar */
.status {
    display: flex;
    align-items: center;
    gap: 8px;
    height: 29px;
    padding: 0 5px 0 6px;
}

.info {
    flex: 1;
    height: 15px;
    border: 1px solid #303030;
    border-radius: 2px;
    background: #5e5e5e;
}

.clip-view {
    width: 156px;
    height: 15px;
    padding: 1px;
    border: 1px solid #303030;
    border-radius: 2px;
    background: #4f4f4f;
}

.clip-view .wave {
    width: 100%;
    height: 100%;
}

.clip-view .wave path {
    fill: #1a1a1a;
    stroke: #1a1a1a;
    stroke-width: 2;
}

.chain {
    display: flex;
    align-items: center;
    gap: 2px;
    height: 29px;
    padding: 0 2px;
    background: var(--well);
    color: #fff;
}

.minimap {
    width: 98px;
    height: 17px;
}
```
FILE: script.js
```js
// Envelope of the vocal take: x position and half height of the waveform
const envelope = [
    [0, .3], [4, .4], [5, 5], [8, 4], [11, 2.5], [15, 2], [17, 1], [20, 3], [22, 1.5], [26, 3], [28, 1.5], [31, 2.5], [33, 1],
    [37, 3.5], [41, 2.5], [45, 3], [48, .5], [52, .5], [54, 4], [59, 4], [61, 2], [65, 2.5], [70, 2], [73, 4], [75, 2], [80, 5],
    [84, 3], [88, 3.5], [93, 2.5], [97, .7], [101, .5], [103, 5.5], [106, 5], [110, 2], [113, 1], [116, 2], [119, 1], [125, 2.5],
    [130, 2], [135, 1], [138, 2.5], [142, 4], [147, 4.5], [150, 3], [155, 4.5], [158, 2], [164, 2], [167, 3], [176, 1.5], [179, .3],
    [198, .3], [200, 3.5], [204, 5], [208, 2], [211, 1.5], [216, 3], [221, 2.5], [226, 2], [229, 1], [235, 3], [240, 3.5], [243, .5],
    [247, .5], [249, 6], [252, 4.5], [256, 2.5], [260, 3], [263, 1.5], [266, 4], [270, 2], [278, 2], [283, 3.5], [288, 1.5],
    [291, .5], [296, .5], [298, 4], [301, 5], [305, 3], [307, .5], [310, 2.5], [313, .8], [316, 3], [323, 4.5], [328, 4], [331, 1.5],
    [334, 5], [338, 6], [343, 5.5], [345, 2], [348, 4], [351, 3], [354, 6], [356, 1.5], [361, 4.5], [364, 2], [368, 5], [371, 6],
    [376, 4], [380, 2], [383, 5], [388, 5], [390, 10], [394, 9], [397, 2], [400, 2], [403, 4], [410, 3], [415, 2.5], [420, 3],
    [423, 2], [428, 3], [431, 4], [435, 2], [440, 4.5], [445, 3.5], [448, 2], [456, 4], [460, 2], [465, 5], [471, 5.5], [475, 3],
    [477, 4], [480, 3], [483, 6], [485, 3], [487, 9], [490, 10], [494, 8], [496, 2], [500, 4.5], [505, 4], [510, 3], [514, 2],
    [516, 6], [520, 5], [522, 2], [523, 6], [530, 5], [535, 4.5], [540, 4], [548, 4], [551, 1.5], [556, 4], [561, 2], [565, 4.5],
    [573, 5], [576, 3], [581, 3], [584, 2], [586, 6], [590, 4], [592, .5], [596, 2], [600, 4], [606, 2.5], [613, 2.5], [616, 3],
    [618, 1], [621, 5], [626, 4], [631, 3.5], [636, 5.5], [640, 2], [642, .5], [646, 3.5], [651, 2.5], [655, 2], [657, 9], [661, 5],
    [666, 4.5], [667, 2], [670, 6], [672, 1], [675, 4], [678, 1.5], [680, 4], [682, 8], [686, 7], [690, 5], [691, 2], [695, 5.5],
    [701, 5.5], [706, 3], [707, .3], [716, .3], [717, 4], [721, 1.5], [726, 4], [731, 3.5], [734, 2], [738, 4], [743, 3], [746, 1],
    [748, 6], [753, 4], [757, 4], [759, 2], [761, 5], [766, 5], [771, 6], [777, 5]
];

// One outline per channel, roughened a little between the points
function wavePath(center) {
    const top = [];
    const bottom = [];
    for (let i = 0; i < envelope.length - 1; i++) {
        const [x0, a0] = envelope[i];
        const [x1, a1] = envelope[i + 1];
        for (let x = x0; x < x1; x++) {
            const base = a0 + (a1 - a0) * (x - x0) / (x1 - x0);
            const amp = Math.max(.4, base * (.9 + .2 * Math.abs(Math.sin(x * 7.3 + center))));
            top.push(x + " " + (center - amp).toFixed(1));
            bottom.unshift(x + " " + (center + amp * .95).toFixed(1));
        }
    }
    return "M" + top.concat(bottom).join("L") + "Z";
}

document.querySelectorAll(".wave").forEach((svg) => {
    svg.innerHTML = `<path d="${wavePath(14)}"/><path d="${wavePath(40)}"/>`;
});

// Rotary controls sweep 300 degrees, clockwise from the lower left
function point(angle, radius) {
    const a = (angle - 90) * Math.PI / 180;
    return (11 + radius * Math.cos(a)).toFixed(2) + " " + (11 + radius * Math.sin(a)).toFixed(2);
}

function arc(from, to) {
    return `M${point(from, 9.3)}A9.3 9.3 0 ${to - from > 180 ? 1 : 0} 1 ${point(to, 9.3)}`;
}

function drawKnob(knob, value) {
    const angle = -150 + 3 * value;
    knob.querySelector("svg").innerHTML =
        `<path d="${arc(angle, 150)}"/><path class="arc" d="${arc(-150, angle)}"/><path d="M11 11L${point(angle, 9)}"/>`;
}

document.querySelectorAll(".dial input").forEach((input) => {
    const knob = document.createElement("span");
    knob.className = "knob";
    knob.innerHTML = '<svg viewBox="0 0 22 22"></svg>';
    input.replaceWith(knob);
    knob.appendChild(input);
    drawKnob(knob, input.value);
    input.oninput = () => drawKnob(knob, input.value);
});
```
